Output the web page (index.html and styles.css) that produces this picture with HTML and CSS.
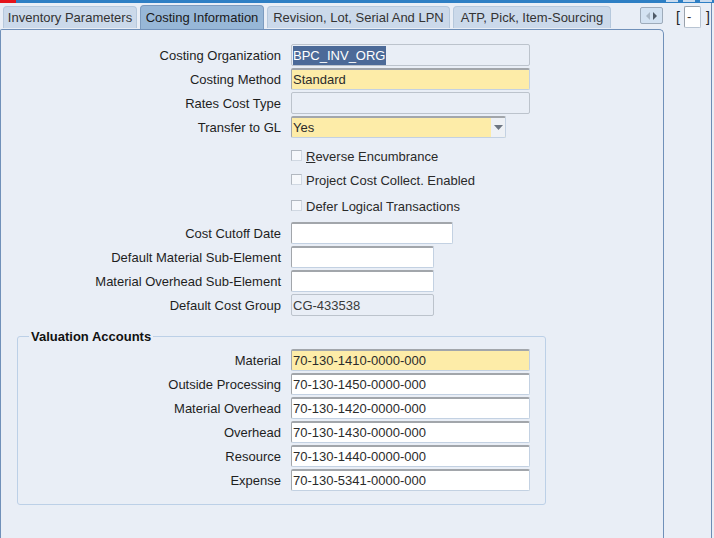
FILE: index.html
```html
<!DOCTYPE html>
<html>
<head>
<meta charset="utf-8">
<link rel="stylesheet" href="styles.css">
</head>
<body>
<div class="titlebar">
  <span class="appicon"></span>
  <span class="winbtns"><i></i><i></i><i></i></span>
</div>
<div class="frame">
  <div class="tabrow">
    <div class="tab t1">Inventory Parameters</div>
    <div class="tab t2 active">Costing Information</div>
    <div class="tab t3">Revision, Lot, Serial And LPN</div>
    <div class="tab t4">ATP, Pick, Item-Sourcing</div>
    <div class="scrollbtn">
      <svg width="21" height="14" viewBox="0 0 21 14">
        <polygon points="9,3 9,11 5,7" fill="#a9b7c6"/>
        <polygon points="12,3 12,11 16,7" fill="#4f5a68"/>
      </svg>
    </div>
    <div class="pager"><span class="br">[</span><span class="pagebox">-</span><span class="br">]</span></div>
  </div>
  <div class="panel">
    <div class="row"><span class="lbl">Costing Organization</span><div class="fld dis w240"><span class="sel">BPC_INV_ORG</span></div></div>
    <div class="row"><span class="lbl">Costing Method</span><div class="fld req w240">Standard</div></div>
    <div class="row"><span class="lbl">Rates Cost Type</span><div class="fld dis w240"></div></div>
    <div class="row"><span class="lbl">Transfer to GL</span><div class="fld req w216 combo"><span class="val">Yes</span><span class="drop"><svg width="9" height="5" viewBox="0 0 9 5"><polygon points="0,0 9,0 4.5,5" fill="#6d7682"/></svg></span></div></div>

    <div class="chkrow first"><span class="chk"></span><span><u>R</u>everse Encumbrance</span></div>
    <div class="chkrow"><span class="chk"></span><span>Project Cost Collect. Enabled</span></div>
    <div class="chkrow last"><span class="chk"></span><span>Defer Logical Transactions</span></div>

    <div class="row"><span class="lbl">Cost Cutoff Date</span><div class="fld w163"></div></div>
    <div class="row"><span class="lbl">Default Material Sub-Element</span><div class="fld w144"></div></div>
    <div class="row"><span class="lbl">Material Overhead Sub-Element</span><div class="fld w144"></div></div>
    <div class="row"><span class="lbl">Default Cost Group</span><div class="fld dis w144">CG-433538</div></div>

    <fieldset class="group">
      <legend>Valuation Accounts</legend>
      <div class="row"><span class="lbl">Material</span><div class="fld req w240">70-130-1410-0000-000</div></div>
      <div class="row"><span class="lbl">Outside Processing</span><div class="fld w240">70-130-1450-0000-000</div></div>
      <div class="row"><span class="lbl">Material Overhead</span><div class="fld w240">70-130-1420-0000-000</div></div>
      <div class="row"><span class="lbl">Overhead</span><div class="fld w240">70-130-1430-0000-000</div></div>
      <div class="row"><span class="lbl">Resource</span><div class="fld w240">70-130-1440-0000-000</div></div>
      <div class="row"><span class="lbl">Expense</span><div class="fld w240">70-130-5341-0000-000</div></div>
    </fieldset>
  </div>
</div>
</body>
</html>
```
FILE: styles.css
```css
* { box-sizing: border-box; }
html, body {
  margin: 0;
  padding: 0;
}
body {
  width: 714px;
  height: 538px;
  overflow: hidden;
  background: #e9eef6;
  font-family: "Liberation Sans", Arial, sans-serif;
  font-size: 13px;
  color: #202020;
}
.titlebar {
  height: 3px;
  background: #2e7fc4;
  display: flex;
  justify-content: space-between;
}
.appicon {
  width: 16px;
  height: 3px;
  background: #e4141b;
}
.winbtns {
  display: flex;
  gap: 5px;
  margin-right: 2px;
}
.winbtns i {
  width: 12px;
  height: 2px;
  background: #c9dbef;
}
.frame {
  width: 712px;
  height: 535px;
  border-right: 1px solid #6e8cb5;
}
.tabrow {
  height: 26px;
  display: flex;
  align-items: flex-start;
  padding-left: 3px;
}
.tab {
  height: 22px;
  margin-top: 3px;
  margin-right: 3px;
  background: #cbd9ea;
  border: 1px solid #b6c8dc;
  border-bottom: none;
  border-radius: 4px 4px 0 0;
  color: #333;
  line-height: 22px;
  text-align: center;
  white-space: nowrap;
}
.tab.active {
  height: 24px;
  margin-top: 2px;
  background: #97b7d7;
  border-color: #7c9bbf;
  color: #1a1a1a;
  line-height: 24px;
}
.t1 { width: 134px; }
.t2 { width: 124px; }
.t3 { width: 183px; }
.t4 { width: 158px; }
.scrollbtn {
  width: 23px;
  height: 17px;
  margin-top: 4px;
  margin-left: 26px;
  background: #d3e2f2;
  border: 1px solid #9eabba;
  border-radius: 2px;
  display: flex;
  align-items: center;
  justify-content: center;
}
.scrollbtn svg { display: block; }
.pager {
  display: flex;
  align-items: center;
  margin-left: 13px;
  margin-top: 3px;
  height: 22px;
}
.br {
  color: #222;
  font-size: 14px;
}
.pagebox {
  width: 17px;
  height: 22px;
  margin: 0 5px 0 4px;
  background: #fff;
  border: 1px solid #b8c4d2;
  border-top-color: #9aa2ac;
  border-left-color: #9aa2ac;
  border-radius: 2px;
  line-height: 19px;
  padding-left: 2px;
  color: #333;
}
.panel {
  width: 664px;
  height: 520px;
  border: 1px solid #7090b9;
  border-bottom: none;
  border-top-right-radius: 5px;
  border-top-left-radius: 2px;
  padding-top: 14px;
}
.row {
  display: flex;
  height: 24px;
  align-items: flex-start;
}
.lbl {
  width: 290px;
  padding-right: 10px;
  padding-top: 2px;
  text-align: right;
  line-height: 20px;
  white-space: nowrap;
  color: #1e1e1e;
}
.fld {
  height: 22px;
  background: #fff;
  border: 1px solid #c3d1e2;
  border-top: 2px solid #a2a6ab;
  border-left-color: #a2a6ab;
  border-radius: 2px;
  padding-left: 1px;
  line-height: 20px;
  color: #2b2b2b;
  white-space: nowrap;
  overflow: hidden;
}
.fld.dis {
  background: #e9eef6;
  border-color: #bcc3cc;
  border-top: 1px solid #bcc3cc;
  line-height: 21px;
  color: #3a3a3a;
}
.fld.req { background: #fdeca8; }
.w240 { width: 239px; }
.w216 { width: 215px; }
.w163 { width: 162px; }
.w144 { width: 143px; }
.sel {
  display: inline-block;
  background: #4c6a98;
  color: #fff;
  line-height: 19px;
  padding-right: 1px;
  margin-top: 1px;
  vertical-align: top;
}
.combo {
  display: flex;
  padding-right: 0;
}
.combo .val { flex: 1; }
.drop {
  width: 14px;
  background: #eef1f5;
  display: flex;
  align-items: center;
  justify-content: center;
}
.drop svg { display: block; }
.chkrow {
  display: flex;
  align-items: center;
  height: 24px;
  padding-left: 290px;
  color: #2a2a2a;
}
.chkrow.first { margin-top: 4px; }
.chkrow.last { margin-top: 2px; margin-bottom: 4px; }
.chk {
  width: 11px;
  height: 11px;
  margin-right: 4px;
  margin-top: -2px;
  background: #f6f8fb;
  border: 1px solid #b2b8c0;
  border-right-color: #d0d8e2;
  border-bottom-color: #d0d8e2;
}
u { text-decoration: underline; text-underline-offset: 1px; }
.group {
  width: 529px;
  margin: 9px 0 0 16px;
  padding: 4px 0 11px 0;
  border: 1px solid #bcd0e7;
  border-radius: 3px;
}
.group legend {
  margin-left: 11px;
  padding: 2px 2px 0 2px;
  font-weight: bold;
  line-height: 16px;
  color: #111;
}
.group .lbl { width: 273px; }
```
